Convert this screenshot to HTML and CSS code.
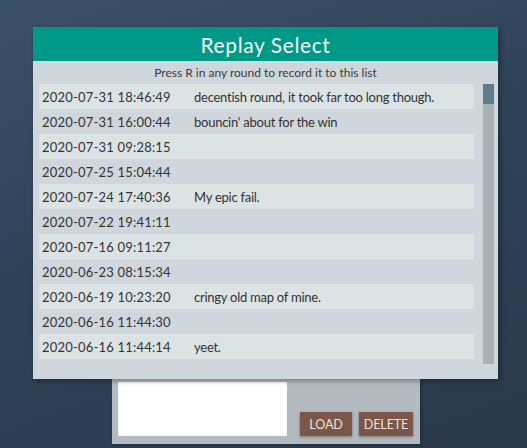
FILE: index.html
```html
<!DOCTYPE html>
<html>
<head>
<meta charset="utf-8">
<link rel="stylesheet" href="styles.css">
</head>
<body>
<div class="stage">
  <div class="dialog">
    <div class="header">Replay Select</div>
    <div class="hint">Press R in any round to record it to this list</div>
    <div class="listwrap">
      <div class="list">
        <div class="row alt"><span class="date">2020-07-31 18:46:49</span><span class="note">decentish round, it took far too long though.</span></div>
        <div class="row"><span class="date">2020-07-31 16:00:44</span><span class="note">bouncin' about for the win</span></div>
        <div class="row alt"><span class="date">2020-07-31 09:28:15</span><span class="note"></span></div>
        <div class="row"><span class="date">2020-07-25 15:04:44</span><span class="note"></span></div>
        <div class="row alt"><span class="date">2020-07-24 17:40:36</span><span class="note">My epic fail.</span></div>
        <div class="row"><span class="date">2020-07-22 19:41:11</span><span class="note"></span></div>
        <div class="row alt"><span class="date">2020-07-16 09:11:27</span><span class="note"></span></div>
        <div class="row"><span class="date">2020-06-23 08:15:34</span><span class="note"></span></div>
        <div class="row alt"><span class="date">2020-06-19 10:23:20</span><span class="note">cringy old map of mine.</span></div>
        <div class="row"><span class="date">2020-06-16 11:44:30</span><span class="note"></span></div>
        <div class="row alt"><span class="date">2020-06-16 11:44:14</span><span class="note">yeet.</span></div>
      </div>
      <div class="scrollbar"><div class="thumb"></div></div>
    </div>
  </div>
  <div class="panel">
    <div class="textbox"></div>
    <div class="buttons">
      <button class="btn">LOAD</button>
      <button class="btn">DELETE</button>
    </div>
  </div>
</div>
</body>
</html>
```

FILE: styles.css
```css
html, body {
  margin: 0;
  padding: 0;
  height: 100%;
}
body {
  background: linear-gradient(160deg, #3b5069 0%, #2f4258 45%, #2a394b 100%);
  font-family: Lato, "Noto Sans", sans-serif;
  color: #333;
  overflow: hidden;
}
.stage {
  display: flex;
  flex-direction: column;
  padding-top: 27px;
  padding-left: 33px;
}
.dialog {
  width: 465px;
  height: 352px;
  background: #cfd7dc;
  box-shadow: 2px 2px 5px rgba(0,0,0,0.35);
  display: flex;
  flex-direction: column;
  position: relative;
  z-index: 2;
}
.header {
  height: 34px;
  background: #009886;
  color: #f3f8f7;
  font-size: 21px;
  display: flex;
  align-items: center;
  justify-content: center;
  letter-spacing: 0.6px;
}
.hint {
  height: 23px;
  font-size: 12px;
  display: flex;
  align-items: center;
  justify-content: center;
  color: #3a3a3a;
}
.listwrap {
  display: flex;
  padding-left: 6px;
  gap: 9px;
}
.list {
  width: 435px;
  display: flex;
  flex-direction: column;
}
.row {
  height: 25px;
  display: flex;
  align-items: center;
  padding-left: 3px;
  font-size: 13px;
  color: #333;
}
.row.alt {
  background: #dce3e5;
}
.date {
  width: 152px;
  flex: none;
  letter-spacing: 0.2px;
}
.note {
  letter-spacing: -0.25px;
}
.scrollbar {
  width: 11px;
  height: 280px;
  background: #aab2b6;
}
.thumb {
  height: 20px;
  background: #607b89;
}
.panel {
  margin-left: 79px;
  width: 308px;
  height: 65px;
  background: #b3bbc0;
  box-shadow: 1px 1px 3px rgba(0,0,0,0.3);
  display: flex;
  align-items: flex-end;
  padding: 3px 7px 8px 6px;
  box-sizing: border-box;
  gap: 13px;
}
.textbox {
  width: 169px;
  height: 54px;
  background: #ffffff;
  box-shadow: inset 0 0 1px rgba(0,0,0,0.3);
}
.buttons {
  display: flex;
  gap: 7px;
}
.btn {
  height: 24px;
  border: none;
  background: #7b5649;
  color: #efe3dc;
  font-family: Lato, "Noto Sans", sans-serif;
  font-size: 12.5px;
  letter-spacing: -0.1px;
  padding: 0;
  box-shadow: 0 1px 3px rgba(0,0,0,0.35);
  cursor: pointer;
}
.btn:first-child {
  width: 52px;
}
.btn:last-child {
  width: 54px;
}
```
